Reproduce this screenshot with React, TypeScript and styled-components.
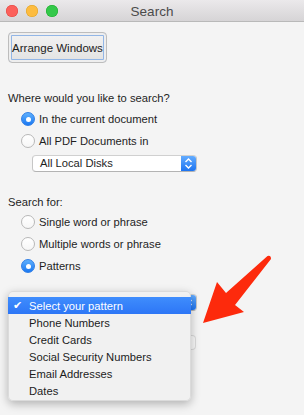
import React from "react";
import styled, { createGlobalStyle, css } from "styled-components";

const Global = createGlobalStyle`
  html, body { margin: 0; padding: 0; }
  body {
    font-family: "Liberation Sans", "Helvetica Neue", Arial, sans-serif;
    font-size: 11px;
    color: #1e1e1e;
    background: #f4f4f4;
  }
  * { box-sizing: border-box; }
`;

const Window = styled.div`
  position: relative;
  width: 304px;
  height: 415px;
  overflow: hidden;
  background: #f4f4f4;
`;

const TitleBar = styled.div`
  height: 22px;
  display: flex;
  align-items: center;
  justify-content: center;
  position: relative;
  background: linear-gradient(#ebe9eb, #d6d4d6);
  border-bottom: 1px solid #b9b9b9;
`;

const Lights = styled.div`
  position: absolute;
  left: 6px;
  top: 5px;
  display: flex;
  gap: 8px;
`;

const Light = styled.span<{ $c: string; $b: string }>`
  width: 12px;
  height: 12px;
  border-radius: 50%;
  background: ${(p) => p.$c};
  box-shadow: inset 0 0 0 0.5px ${(p) => p.$b};
`;

const Title = styled.div`
  font-size: 13.5px;
  color: #4b4b4b;
  margin-top: 1px;
`;

const Content = styled.div`
  padding: 10px 8px 0 8px;
  display: flex;
  flex-direction: column;
`;

const PushButton = styled.button`
  align-self: flex-start;
  width: 99px;
  height: 31px;
  padding: 0;
  font-family: inherit;
  font-size: 11.5px;
  white-space: nowrap;
  color: #1b1b1b;
  border-radius: 4px;
  border: 1px solid #bdbdbd;
  background: linear-gradient(#f3f3f3, #e2e2e2);
  box-shadow: inset 0 0 0 2px #eeeeee, inset 0 0 0 3px #92b6e6;
  display: flex;
  align-items: center;
  justify-content: center;
`;

const Label = styled.div<{ $mt: number }>`
  height: 16px;
  line-height: 16px;
  margin-top: ${(p) => p.$mt}px;
  font-size: 11.2px;
  white-space: nowrap;
`;

const RadioRow = styled.div<{ $mt?: number }>`
  height: 22px;
  margin-top: ${(p) => p.$mt ?? 0}px;
  padding-left: 13px;
  display: flex;
  align-items: center;
  gap: 4px;
  font-size: 11.2px;
  white-space: nowrap;
`;

const Radio = styled.span<{ $on?: boolean }>`
  width: 14px;
  height: 14px;
  flex: none;
  border-radius: 50%;
  display: flex;
  align-items: center;
  justify-content: center;
  ${(p) =>
    p.$on
      ? css`
          background: linear-gradient(#5fb0fd, #1a78f2);
          border: 1px solid #2f7ee6;
          &::after {
            content: "";
            width: 5px;
            height: 5px;
            border-radius: 50%;
            background: #fff;
          }
        `
      : css`
          background: linear-gradient(#ffffff, #f6f6f6);
          border: 1px solid #b8b8b8;
        `}
`;

const PopUp = styled.div<{ $mt: number; $w: number }>`
  margin-top: ${(p) => p.$mt}px;
  margin-left: 24px;
  width: ${(p) => p.$w}px;
  height: 17px;
  border-radius: 4px;
  border: 1px solid #c6c6c6;
  border-top-color: #d0d0d0;
  border-bottom-color: #b3b3b3;
  background: #ffffff;
  display: flex;
  align-items: center;
  overflow: hidden;
`;

const PopText = styled.span`
  flex: 1;
  padding-left: 7px;
  font-size: 11.2px;
  line-height: 15px;
`;

const Stepper = styled.span`
  width: 15px;
  height: 100%;
  background: linear-gradient(#63acff, #1d74f1);
  display: flex;
  align-items: center;
  justify-content: center;
`;

const Menu = styled.div`
  position: absolute;
  left: 8px;
  top: 291px;
  width: 183px;
  height: 110px;
  padding-top: 5px;
  border-radius: 5px;
  background: rgba(241, 241, 241, 0.98);
  border: 1px solid rgba(0, 0, 0, 0.09);
  box-shadow: 0 3px 10px rgba(0, 0, 0, 0.28);
`;

const MenuItem = styled.div<{ $sel?: boolean }>`
  height: 17px;
  display: flex;
  align-items: center;
  position: relative;
  font-size: 11.2px;
  white-space: nowrap;
  color: ${(p) => (p.$sel ? "#ffffff" : "#1c1c1c")};
  background: ${(p) => (p.$sel ? "linear-gradient(#3f8dfd, #2d76f6)" : "transparent")};
  margin: 0 -1px;
  padding-left: 21px;
`;

const Check = styled.span`
  position: absolute;
  left: 5px;
  top: 0;
  font-size: 11px;
  line-height: 17px;
  font-family: "DejaVu Sans", sans-serif;
`;

const Faint = styled.div`
  position: absolute;
  left: 187px;
  top: 335px;
  width: 9px;
  height: 15px;
  border-radius: 0 4px 4px 0;
  border: 1px solid #dadada;
  border-left: none;
  background: #f8f8f8;
`;

const Overlay = styled.svg`
  position: absolute;
  left: 0;
  top: 0;
  pointer-events: none;
`;

const Chevrons = () => (
  <svg width="9" height="13" viewBox="0 0 9 13">
    <path d="M1.5 5 L4.5 2 L7.5 5 M1.5 8 L4.5 11 L7.5 8" fill="none" stroke="#fff" strokeWidth="1.4" />
  </svg>
);

export default function App() {
  return (
    <>
      <Global />
      <Window>
        <TitleBar>
          <Lights>
            <Light $c="#fc605b" $b="#e0443e" />
            <Light $c="#fdbc40" $b="#dea123" />
            <Light $c="#34c84a" $b="#1aab29" />
          </Lights>
          <Title>Search</Title>
        </TitleBar>
        <Content>
          <PushButton>Arrange Windows</PushButton>
          <Label $mt={27}>Where would you like to search?</Label>
          <RadioRow $mt={2}>
            <Radio $on />
            In the current document
          </RadioRow>
          <RadioRow>
            <Radio />
            All PDF Documents in
          </RadioRow>
          <PopUp $mt={3} $w={165}>
            <PopText>All Local Disks</PopText>
            <Stepper>
              <Chevrons />
            </Stepper>
          </PopUp>
          <Label $mt={22}>Search for:</Label>
          <RadioRow $mt={1}>
            <Radio />
            Single word or phrase
          </RadioRow>
          <RadioRow>
            <Radio />
            Multiple words or phrase
          </RadioRow>
          <RadioRow>
            <Radio $on />
            Patterns
          </RadioRow>
          <PopUp $mt={17} $w={165}>
            <PopText />
            <Stepper>
              <Chevrons />
            </Stepper>
          </PopUp>
        </Content>
        <Faint />
        <Menu>
          <MenuItem $sel>
            <Check>✔</Check>
            Select your pattern
          </MenuItem>
          <MenuItem>Phone Numbers</MenuItem>
          <MenuItem>Credit Cards</MenuItem>
          <MenuItem>Social Security Numbers</MenuItem>
          <MenuItem>Email Addresses</MenuItem>
          <MenuItem>Dates</MenuItem>
        </Menu>
        <Overlay width="304" height="415" viewBox="0 0 304 415">
          <path
            d="M203 323 L217 282 L226 293 L267.5 256 Q271 255 271 259 L235 305 L244 312 Z"
            fill="#fd2a0c"
          />
        </Overlay>
      </Window>
    </>
  );
}
